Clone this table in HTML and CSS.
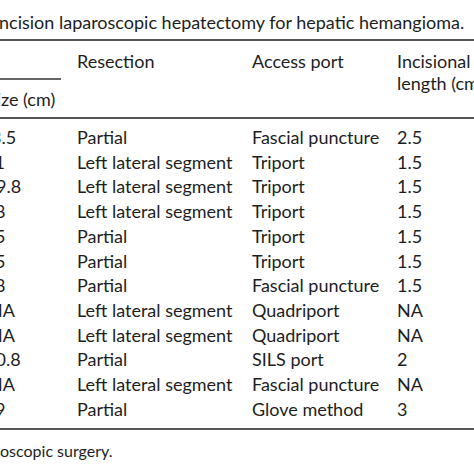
FILE: index.html
```html
<!DOCTYPE html>
<html>
<head>
<meta charset="utf-8">
<link rel="stylesheet" href="styles.css">
</head>
<body>
<div class="page">
  <p class="title">ncision laparoscopic hepatectomy for hepatic hemangioma.</p>
  <table class="tbl">
    <colgroup>
      <col class="c1"><col class="c2"><col class="c3"><col class="c4">
    </colgroup>
    <thead>
      <tr class="h1">
        <th class="grp"><div class="grp-rule"></div></th>
        <th rowspan="2">Resection</th>
        <th rowspan="2">Access port</th>
        <th rowspan="2">Incisional<br>length (cm)</th>
      </tr>
      <tr class="h2">
        <th class="size">Size (cm)</th>
      </tr>
    </thead>
    <tbody>
      <tr class="first"><td class="n n-a">3.5</td><td>Partial</td><td>Fascial puncture</td><td>2.5</td></tr>
      <tr><td class="n n-b">11</td><td>Left lateral segment</td><td>Triport</td><td>1.5</td></tr>
      <tr><td class="n n-c">9.8</td><td>Left lateral segment</td><td>Triport</td><td>1.5</td></tr>
      <tr><td class="n">8</td><td>Left lateral segment</td><td>Triport</td><td>1.5</td></tr>
      <tr><td class="n">5</td><td>Partial</td><td>Triport</td><td>1.5</td></tr>
      <tr><td class="n">5</td><td>Partial</td><td>Triport</td><td>1.5</td></tr>
      <tr><td class="n">8</td><td>Partial</td><td>Fascial puncture</td><td>1.5</td></tr>
      <tr><td class="n n-na">NA</td><td>Left lateral segment</td><td>Quadriport</td><td>NA</td></tr>
      <tr><td class="n n-na">NA</td><td>Left lateral segment</td><td>Quadriport</td><td>NA</td></tr>
      <tr><td class="n n-d">10.8</td><td>Partial</td><td>SILS port</td><td>2</td></tr>
      <tr><td class="n n-na">NA</td><td>Left lateral segment</td><td>Fascial puncture</td><td>NA</td></tr>
      <tr class="last"><td class="n">9</td><td>Partial</td><td>Glove method</td><td>3</td></tr>
    </tbody>
  </table>
  <p class="foot">oscopic surgery.</p>
</div>
</body>
</html>
```

FILE: styles.css
```css
html, body {
  margin: 0;
  padding: 0;
  background: #ffffff;
}
body {
  width: 474px;
  height: 474px;
  overflow: hidden;
  font-family: Lato, "Open Sans", sans-serif;
  font-size: 18px;
  color: #1e1e1e;
}
.page {
  width: 640px;
}
.title {
  margin: 0;
  padding: 11px 0 0 0;
  height: 28px;
  line-height: 22px;
  margin-left: -1px;
  white-space: nowrap;
}
.tbl {
  margin-left: -13px;
  border-collapse: collapse;
  table-layout: fixed;
  width: 560px;
  border-top: 2px solid #555;
  border-bottom: 2px solid #555;
}
.c1 { width: 90px; }
.c2 { width: 175px; }
.c3 { width: 145px; }
.c4 { width: 150px; }
th, td {
  padding: 0;
  text-align: left;
  font-weight: normal;
  vertical-align: top;
  white-space: nowrap;
}
thead {
  border-bottom: 2px solid #555;
}
thead th {
  line-height: 22px;
  padding-top: 9px;
}
.tbl thead tr.h2 th {
  padding-top: 8px;
  padding-bottom: 7px;
}
.tbl thead th.grp {
  padding-top: 0;
  height: 39px;
  vertical-align: bottom;
}
.grp-rule {
  margin-right: 16px;
  border-bottom: 2px solid #666;
}
td {
  line-height: 24.7px;
}
td.n {
  padding-left: 8px;
}
td.n-a { text-indent: -4px; }
td.n-b { text-indent: -11px; }
td.n-c { text-indent: 1px; }
td.n-d { text-indent: -10px; }
td.n-na { text-indent: -6px; }
tr.first td {
  padding-top: 6px;
}
tr.last td {
  padding-bottom: 7px;
}
.foot {
  margin: 0;
  margin-left: 0;
  padding-top: 10px;
  line-height: 22px;
  font-size: 16px;
  white-space: nowrap;
}
```
